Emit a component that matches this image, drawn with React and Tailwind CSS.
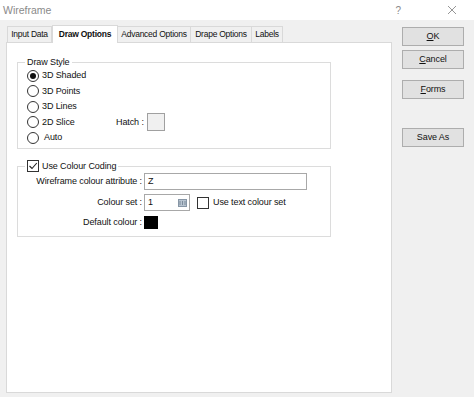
import React from "react";

const font = { fontFamily: '"Liberation Sans", Arial, sans-serif' };

function Radio({ checked, label, gap = "ml-[3px]" }) {
  return (
    <div className="flex items-center h-[15.5px]">
      <span className="w-[12px] h-[12px] rounded-full border border-[#333] bg-white flex items-center justify-center shrink-0">
        {checked && <span className="w-[6px] h-[6px] rounded-full bg-[#111]" />}
      </span>
      <span className={gap}>{label}</span>
    </div>
  );
}

function Check({ checked }) {
  return (
    <span className="w-[12px] h-[12px] border border-[#333] bg-white flex items-center justify-center shrink-0">
      {checked && (
        <svg width="10" height="10" viewBox="0 0 10 10">
          <path d="M1.5 5 L4 7.5 L8.8 2" fill="none" stroke="#222" strokeWidth="1.1" />
        </svg>
      )}
    </span>
  );
}

function Btn({ children }) {
  return (
    <div className="w-[62px] h-[19px] border border-[#adadad] bg-[#e1e1e1] flex items-center justify-center text-[#111]">
      {children}
    </div>
  );
}

export default function App() {
  return (
    <div
      className="w-[474px] h-[397px] bg-[#f0f0f0] flex flex-col text-[9px] leading-[11px] tracking-[-0.1px] text-[#111] overflow-hidden"
      style={font}
    >
      <div className="h-[20px] bg-white flex items-center justify-between shrink-0">
        <span className="ml-[3px] text-[10.5px] tracking-normal text-[#8a8a8a]">Wireframe</span>
        <div className="flex items-center text-[#8a8a8a] text-[10px]">
          <span className="mr-[46px]">?</span>
          <svg width="10" height="10" viewBox="0 0 10 10" className="mr-[17px]">
            <path d="M1 1 L9 9 M9 1 L1 9" stroke="#8a8a8a" strokeWidth="0.9" />
          </svg>
        </div>
      </div>
      <div className="flex flex-1">
        <div className="ml-[6px] w-[386px] flex flex-col">
          <div className="flex items-end h-[22px] pl-[1px] whitespace-nowrap text-[8.5px] tracking-[-0.25px]">
            <div className="w-[45px] h-[16px] flex items-center justify-center border border-b-0 border-[#d9d9d9]">Input Data</div>
            <div className="w-[66px] h-[18px] flex items-center justify-center bg-white border border-b-0 border-[#d9d9d9] font-bold relative top-[1px] z-10">Draw Options</div>
            <div className="w-[73px] h-[16px] flex items-center justify-center border border-b-0 border-l-0 border-[#d9d9d9]">Advanced Options</div>
            <div className="w-[61px] h-[16px] flex items-center justify-center border border-b-0 border-l-0 border-[#d9d9d9]">Drape Options</div>
            <div className="w-[31px] h-[16px] flex items-center justify-center border border-b-0 border-l-0 border-[#d9d9d9]">Labels</div>
          </div>
          <div className="h-[351px] bg-white border border-[#d9d9d9] pl-[10px] pt-[14px] flex flex-col">
            <fieldset className="w-[314px] h-[92px] border border-[#dcdcdc] p-0 m-0">
              <legend className="ml-[7px] px-[2px] leading-[11px]">Draw Style</legend>
              <div className="flex flex-col pl-[9px]">
                <Radio checked label="3D Shaded" />
                <Radio label="3D Points" />
                <Radio label="3D Lines" />
                <div className="flex items-center h-[15.5px]">
                  <div className="w-[89px]"><Radio label="2D Slice" /></div>
                  <span>Hatch :</span>
                  <span className="ml-[3px] w-[18px] h-[18px] -my-[2px] border border-[#a0a0a0] bg-[#f0f0f0]" />
                </div>
                <Radio label="Auto" gap="ml-[5px]" />
              </div>
            </fieldset>
            <fieldset className="mt-[11px] w-[314px] h-[77px] border border-[#dcdcdc] m-0 p-0">
              <legend className="ml-[7px] px-[2px] leading-[12px]">
                <span className="flex items-center">
                  <Check checked />
                  <span className="ml-[3px]">Use Colour Coding</span>
                </span>
              </legend>
              <div className="flex flex-col mt-[1px]">
                <div className="flex items-center h-[17px]">
                  <span className="w-[126px] text-right pr-[2px] whitespace-nowrap">Wireframe colour attribute :</span>
                  <div className="w-[163px] h-[17px] border border-[#a8a8a8] bg-white flex items-center pl-[3px]">Z</div>
                </div>
                <div className="flex items-center h-[17px] mt-[4px]">
                  <span className="w-[126px] text-right pr-[2px]">Colour set :</span>
                  <div className="w-[46px] h-[17px] border border-[#a8a8a8] bg-white flex items-center pl-[3px] justify-between">
                    <span>1</span>
                    <svg width="9" height="8" viewBox="0 0 9 8" className="mr-[2px]">
                      <rect x="0.5" y="0.5" width="8" height="7" fill="#b8c4d0" stroke="#8796a6" />
                      <path d="M2 2 V6 M4.5 2 V6 M7 2 V6" stroke="#6d7d8e" strokeWidth="0.8" />
                    </svg>
                  </div>
                  <span className="ml-[7px]"><Check /></span>
                  <span className="ml-[4px]">Use text colour set</span>
                </div>
                <div className="flex items-center h-[16px] mt-[3.5px]">
                  <span className="w-[126px] text-right pr-[2px]">Default colour :</span>
                  <span className="w-[14px] h-[13px] bg-black" />
                </div>
              </div>
            </fieldset>
          </div>
        </div>
        <div className="ml-[10px] mt-[7px] flex flex-col">
          <Btn><span><u>O</u>K</span></Btn>
          <div className="mt-[4px]"><Btn><span><u>C</u>ancel</span></Btn></div>
          <div className="mt-[11px]"><Btn><span><u>F</u>orms</span></Btn></div>
          <div className="mt-[29px]"><Btn>Save As</Btn></div>
        </div>
      </div>
    </div>
  );
}
